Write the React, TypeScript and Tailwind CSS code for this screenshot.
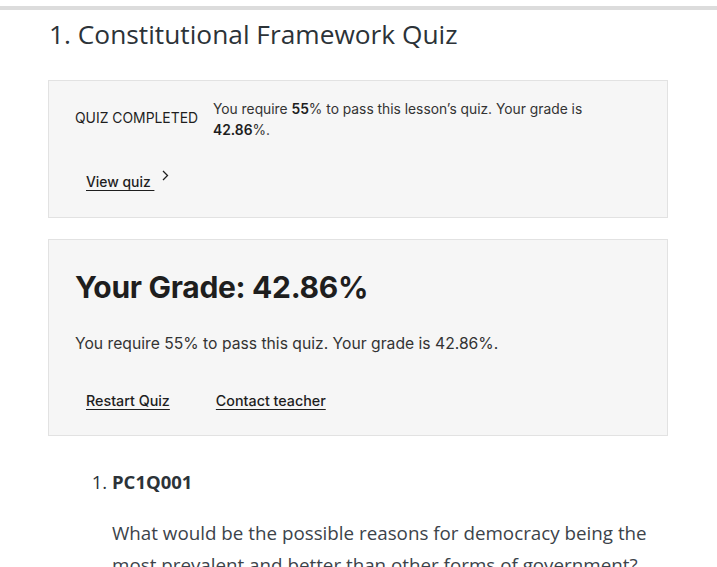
export default function App() {
  return (
    <div className="min-h-[567px] bg-white">
      <div className="h-[4px] bg-[#dcdcdc] mt-[6px]" />
      <div className="px-[48px] pt-[4px]">
        <h1 className="font-['Open_Sans',sans-serif] text-[26.3px] leading-[40px] text-[#2c3338] ml-[1px]">
          1. Constitutional Framework Quiz
        </h1>

        <div className="mt-[26px] w-[620px] border border-[#e2e2e2] bg-[#f6f6f6] font-['Inter',sans-serif] text-[#1e1e1e]">
          <div className="flex items-start pl-[26px] pt-[18px]">
            <div className="w-[138px] pt-[9px] text-[13.9px] leading-[20px]">QUIZ COMPLETED</div>
            <p className="w-[400px] text-[13.8px] leading-[21px] text-[#333]">
              You require <strong className="font-semibold text-[#1e1e1e]">55</strong>% to pass this lesson’s quiz. Your grade is{' '}
              <strong className="font-semibold text-[#1e1e1e]">42.86</strong>%.
            </p>
          </div>
          <div className="flex items-start pl-[37px] pt-[31px] pb-[25px]">
            <a href="#" className="text-[13.9px] leading-[20px] font-medium underline underline-offset-[3px]">
              View quiz&nbsp;
            </a>
            <svg className="ml-[6px] -mt-[4px]" width="10" height="15" viewBox="0 0 10 15" fill="none">
              <path d="M3 3 7.5 7.5 3 12" stroke="#1e1e1e" strokeWidth="1.3" />
            </svg>
          </div>
        </div>

        <div className="mt-[21px] w-[620px] border border-[#e2e2e2] bg-[#f6f6f6] font-['Inter',sans-serif] text-[#1e1e1e] pl-[26px] pt-[28px] pb-[24px]">
          <h2 className="text-[30px] leading-[38px] font-bold tracking-[-0.3px]">Your Grade: 42.86%</h2>
          <p className="mt-[26px] text-[15.7px] leading-[24px] text-[#333]">
            You require 55% to pass this quiz. Your grade is 42.86%.
          </p>
          <div className="mt-[35px] flex gap-[46px] pl-[11px] text-[14.3px] leading-[20px] font-medium">
            <a href="#" className="underline underline-offset-[3px]">Restart Quiz</a>
            <a href="#" className="underline underline-offset-[3px]">Contact teacher</a>
          </div>
        </div>

        <ol className="mt-[32px] pl-[64px] font-['Open_Sans',sans-serif] text-[#2c3338] list-decimal">
          <li className="text-[18.5px] leading-[28px]">
            <strong className="font-bold">PC1Q001</strong>
            <p className="mt-[21px] text-[18.8px] leading-[32px] font-normal text-[#3c434a]">
              What would be the possible reasons for democracy being the most prevalent and better than other forms of government?
            </p>
          </li>
        </ol>
      </div>
    </div>
  );
}
